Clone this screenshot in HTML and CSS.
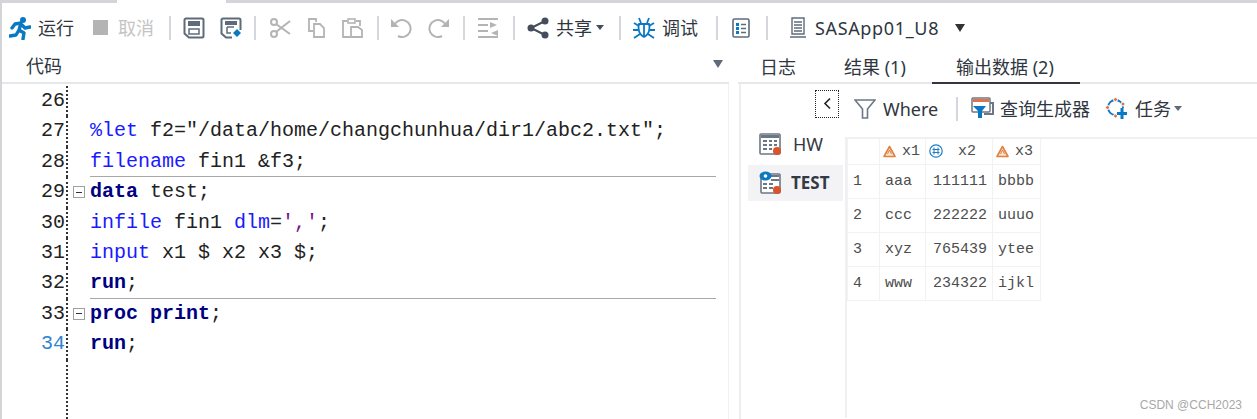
FILE: index.html
```html
<!DOCTYPE html>
<html lang="zh-CN">
<head>
<meta charset="utf-8">
<title>SAS Studio</title>
<link rel="stylesheet" href="styles.css">
</head>
<body>
<div class="app">
  <div class="topline"><span class="tl-a"></span><span class="tl-b"></span><span class="tl-c"></span></div>
  <div class="toolbar">
    <svg class="ic" width="22" height="24" viewBox="0 0 22 24"><circle cx="14" cy="4" r="3" fill="#0b78c4"/><path d="M12 7 L6 8 L3 12 M12 7 L10 14 L15 17 L14 23 M10 14 L7 19 L1 20 M13 9 L16 12 L21 11" fill="none" stroke="#0b78c4" stroke-width="3.4" stroke-linecap="round" stroke-linejoin="round"/></svg>
    <span class="lbl">运行</span>
    <span class="stop"></span>
    <span class="lbl off">取消</span>
    <span class="sep"></span>
    <svg class="ic" width="22" height="22" viewBox="0 0 22 22"><path d="M3 1.5 H19 A1.5 1.5 0 0 1 20.500 3 V19 A1.500 1.500 0 0 1 19 20.500 H6 L1.500 16.500 V3 A1.500 1.500 0 0 1 3 1.500 Z" fill="none" stroke="#5f6b7a" stroke-width="2"/><rect x="5" y="4" width="12" height="5" fill="#5f6b7a"/><rect x="6" y="12" width="10" height="5" fill="none" stroke="#5f6b7a" stroke-width="1.500"/></svg>
    <svg class="ic" width="22" height="22" viewBox="0 0 22 22"><path d="M3 1.500 H19 A1.500 1.500 0 0 1 20.500 3 V13 M12 20.500 H6 L1.500 16.500 V3 A1.500 1.500 0 0 1 3 1.500" fill="none" stroke="#5f6b7a" stroke-width="2"/><rect x="5" y="4" width="12" height="4" fill="#5f6b7a"/><path d="M7 10 V16 H11 M7 10 H14" fill="none" stroke="#5f6b7a" stroke-width="1.500"/><path d="M17 12 L21 16 L17 20 L13 16 Z" fill="#0b78c4"/></svg>
    <span class="sep"></span>
    <svg class="ic" width="22" height="22" viewBox="0 0 22 22"><circle cx="5" cy="5" r="3" fill="none" stroke="#b4b4b4" stroke-width="2"/><circle cx="5" cy="17" r="3" fill="none" stroke="#b4b4b4" stroke-width="2"/><path d="M7 7 L21 17 M7 15 L21 4" stroke="#b4b4b4" stroke-width="2"/></svg>
    <svg class="ic" width="19" height="22" viewBox="0 0 19 22"><path d="M9 5 V2 H2 V14 H6" fill="none" stroke="#b4b4b4" stroke-width="1.800"/><path d="M7 7 H13 L17 11 V20 H7 Z" fill="none" stroke="#b4b4b4" stroke-width="1.800"/></svg>
    <svg class="ic" width="22" height="22" viewBox="0 0 22 22"><path d="M6 4 H2 V20 H9 M15 4 H19 V9" fill="none" stroke="#b4b4b4" stroke-width="1.800"/><rect x="7" y="2" width="7" height="4" fill="none" stroke="#b4b4b4" stroke-width="1.600"/><path d="M10 10 H17 L21 13 V20 H10 Z" fill="none" stroke="#b4b4b4" stroke-width="1.800"/></svg>
    <span class="sep"></span>
    <svg class="ic" width="23" height="22" viewBox="0 0 23 22"><path d="M4 9 A8.500 8.500 0 1 1 8 19" fill="none" stroke="#b4b4b4" stroke-width="2"/><path d="M1 2 V10 H9 Z" fill="#b4b4b4"/></svg>
    <svg class="ic" width="23" height="22" viewBox="0 0 23 22"><path d="M19 9 A8.500 8.500 0 1 0 15 19" fill="none" stroke="#b4b4b4" stroke-width="2"/><path d="M22 2 V10 H14 Z" fill="#b4b4b4"/></svg>
    <span class="sep"></span>
    <svg class="ic" width="22" height="22" viewBox="0 0 22 22"><path d="M1 2 H21 M1 20 H21 M1 8 H11 M1 14 H11" stroke="#b4b4b4" stroke-width="2"/><path d="M13 5 L20 8 L13 11 Z M21 13 L14 16 L21 19 Z" fill="#b4b4b4"/></svg>
    <span class="sep"></span>
    <svg class="ic" width="23" height="22" viewBox="0 0 23 22"><path d="M18 4 L4 11 L18 18" fill="none" stroke="#444e5a" stroke-width="2"/><circle cx="18" cy="4" r="3.500" fill="#444e5a"/><circle cx="4" cy="11" r="3.500" fill="#444e5a"/><circle cx="18" cy="18" r="3.500" fill="#444e5a"/></svg>
    <span class="lbl">共享</span>
    <span class="caret"></span>
    <span class="sep"></span>
    <svg class="ic" width="22" height="24" viewBox="0 0 22 24"><path d="M6 8 H16 C17 11 17 18 11 21 C5 18 5 11 6 8 Z" fill="none" stroke="#0b78c4" stroke-width="1.800"/><path d="M11 8 V21 M6 2 L8 7 M16 2 L14 7 M1 7 L6 10 M21 7 L16 10 M0 14 H6 M22 14 H16 M1 22 L7 18 M21 22 L15 18" fill="none" stroke="#0b78c4" stroke-width="1.800"/></svg>
    <span class="lbl">调试</span>
    <span class="sep"></span>
    <svg class="ic" width="18" height="20" viewBox="0 0 18 20"><rect x="1" y="1" width="16" height="18" rx="1.500" fill="none" stroke="#5f6b7a" stroke-width="1.600"/><path d="M4 5 H7 V8 H4 Z M4 9 H7 V12 H4 Z M4 13 H7 V16 H4 Z" fill="#0b78c4"/><path d="M9 6.500 H14 M9 10.500 H14 M9 14.500 H14" stroke="#5f6b7a" stroke-width="1.600"/></svg>
    <span class="sep"></span>
    <svg class="ic" width="16" height="21" viewBox="0 0 16 21"><path d="M2 1 H14 V17 H2 Z" fill="none" stroke="#5f6b7a" stroke-width="1.400"/><path d="M4 5 H12 M4 8 H12 M4 11 H12 M4 14 H12 M0 20 H16" stroke="#5f6b7a" stroke-width="1.400"/></svg>
    <span class="lbl wide">SASApp01_U8</span>
    <span class="caret big"></span>
  </div>

  <div class="panes">
    <section class="left">
      <div class="tabs-l"><span class="tab-code">代码</span><span class="caret gray"></span></div>
      <div class="editor">
        <div class="ln"><span class="no">26</span><span class="fold"></span><span class="code"></span></div>
        <div class="ln"><span class="no">27</span><span class="fold"></span><span class="code"><span class="kw">%let</span> f2=<span class="str">"/data/home/changchunhua/dir1/abc2.txt"</span>;</span></div>
        <div class="ln"><span class="no">28</span><span class="fold"></span><span class="code rule"><span class="kw">filename</span> fin1 &amp;f3;</span></div>
        <div class="ln"><span class="no">29</span><span class="fold"><i class="box"></i></span><span class="code"><b class="bk">data</b> test;</span></div>
        <div class="ln"><span class="no">30</span><span class="fold"></span><span class="code"><span class="kw">infile</span> fin1 <span class="kw">dlm</span>=<span class="lit">','</span>;</span></div>
        <div class="ln"><span class="no">31</span><span class="fold"></span><span class="code"><span class="kw">input</span> x1 $ x2 x3 $;</span></div>
        <div class="ln"><span class="no">32</span><span class="fold"></span><span class="code rule"><b class="bk">run</b>;</span></div>
        <div class="ln"><span class="no">33</span><span class="fold"><i class="box"></i></span><span class="code"><b class="bk">proc print</b>;</span></div>
        <div class="ln"><span class="no cur">34</span><span class="fold"></span><span class="code"><b class="bk">run</b>;</span></div>
        <div class="ln fill"><span class="no"></span><span class="fold"></span><span class="code"></span></div>
      </div>
    </section>

    <section class="right">
      <div class="tabs-r">
        <span class="tab t1">日志</span>
        <span class="tab t2">结果 (1)</span>
        <span class="tab t3">输出数据 (2)</span>
      </div>
      <div class="body-r">
        <div class="tools-r">
          <span class="collapse"><svg width="9" height="13" viewBox="0 0 9 13"><path d="M7 1.500 L2 6.500 L7 11.500" fill="none" stroke="#222" stroke-width="1.600"/></svg></span>
          <svg class="ic" width="22" height="22" viewBox="0 0 22 22"><path d="M1 2 H21 L13.500 11 V20 H8.500 V11 Z" fill="none" stroke="#6c7785" stroke-width="1.600"/></svg>
          <span class="lbl">Where</span>
          <span class="sep"></span>
          <svg class="ic" width="23" height="23" viewBox="0 0 23 23"><rect x="1" y="1" width="18" height="14" rx="1" fill="#fff" stroke="#6c7785" stroke-width="1.500"/><rect x="2" y="2" width="16" height="3" fill="#e0734a"/><path d="M19 6 H22 V17 H13" fill="none" stroke="#6c7785" stroke-width="2"/><path d="M2 9 H15 L11 14 V21 H7 V14 Z" fill="#0b78c4"/></svg>
          <span class="lbl">查询生成器</span>
          <svg class="ic" width="23" height="23" viewBox="0 0 23 23"><circle cx="10.500" cy="10.500" r="7.500" fill="none" stroke="#0b78c4" stroke-width="1.800"/><circle cx="10.500" cy="2.500" r="2" fill="#e0734a" stroke="#fff"/><circle cx="2.500" cy="10.500" r="2" fill="#e0734a" stroke="#fff"/><circle cx="18" cy="7" r="2" fill="#e0734a" stroke="#fff"/><circle cx="10.500" cy="19" r="2" fill="#e0734a" stroke="#fff"/><path d="M17 11 V22 M12 16.500 H22" stroke="#fff" stroke-width="5"/><path d="M17 11 V22 M12 16.500 H22" stroke="#0b78c4" stroke-width="3"/></svg>
          <span class="lbl">任务</span>
          <span class="caret gray small"></span>
        </div>
        <div class="content-r">
          <nav class="side">
            <div class="item">
              <svg width="23" height="23" viewBox="0 0 23 23"><rect x="1" y="1" width="20" height="20" rx="1" fill="#fff" stroke="#6c7785" stroke-width="1.600"/><rect x="2" y="2" width="18" height="3" fill="#6c7785"/><path d="M4 8 H8 M10 8 H13 M15 8 H18 M4 12 H8 M10 12 H13 M15 12 H18 M4 16 H8 M10 16 H13" stroke="#6c7785" stroke-width="1.800"/><circle cx="18" cy="18" r="4" fill="#d9532c"/></svg>
              <span class="name">HW</span>
            </div>
            <div class="item on">
              <svg width="23" height="24" viewBox="0 0 23 24"><rect x="2" y="3" width="19" height="19" rx="1" fill="#fff" stroke="#6c7785" stroke-width="1.600"/><path d="M12 5 H20 M12 9 H20 M4 13 H8 M10 13 H14 M4 17 H8 M10 17 H14" stroke="#6c7785" stroke-width="1.800"/><ellipse cx="6.500" cy="5" rx="6" ry="4.500" fill="#0b78c4"/><circle cx="6.500" cy="5" r="1.800" fill="#fff"/><circle cx="18" cy="19" r="4" fill="#d9532c"/></svg>
              <span class="name">TEST</span>
            </div>
          </nav>
          <div class="grid-wrap">
            <table class="grid">
              <colgroup><col class="c0"><col class="c1"><col class="c2"><col class="c3"></colgroup>
              <thead>
                <tr>
                  <th></th>
                  <th><span class="h"><svg class="tri" width="13" height="13" viewBox="0 0 13 13"><path d="M6.500 1.500 L12 11.500 H1 Z" fill="#fbe3d3" stroke="#e0813f" stroke-width="1.600" stroke-linejoin="round"/><path d="M4.500 9 L6.500 5 L8.500 9" fill="none" stroke="#e0813f"/></svg>x1</span></th>
                  <th><span class="h"><svg class="num" width="14" height="14" viewBox="0 0 14 14"><circle cx="7" cy="7" r="6.200" fill="none" stroke="#1f7cc4" stroke-width="1.200"/><path d="M5 3.500 V10.500 M9 3.500 V10.500 M3.500 5.500 H10.500 M3.500 8.500 H10.500" stroke="#1f7cc4"/></svg><span class="hx2">x2</span></span></th>
                  <th><span class="h"><svg class="tri" width="13" height="13" viewBox="0 0 13 13"><path d="M6.500 1.500 L12 11.500 H1 Z" fill="#fbe3d3" stroke="#e0813f" stroke-width="1.600" stroke-linejoin="round"/><path d="M4.500 9 L6.500 5 L8.500 9" fill="none" stroke="#e0813f"/></svg>x3</span></th>
                </tr>
              </thead>
              <tbody>
                <tr><td>1</td><td>aaa</td><td>111111</td><td>bbbb</td></tr>
                <tr><td>2</td><td>ccc</td><td>222222</td><td>uuuo</td></tr>
                <tr><td>3</td><td>xyz</td><td>765439</td><td>ytee</td></tr>
                <tr><td>4</td><td>www</td><td>234322</td><td>ijkl</td></tr>
              </tbody>
            </table>
          </div>
        </div>
      </div>
    </section>
  </div>
  <div class="mark">CSDN @CCH2023</div>
</div>
</body>
</html>
```

FILE: styles.css
```css
* { box-sizing: border-box; }
html, body { margin: 0; padding: 0; background: #fff; }
body { width: 1257px; height: 419px; overflow: hidden; font-family: "Noto Sans", "Noto Sans CJK SC", sans-serif; color: #2f3640; }
.app { position: relative; width: 1257px; height: 419px; border-left: 2px solid #d4d5d9; display: flex; flex-direction: column; }

.topline { display: flex; height: 3px; margin-left: -2px; flex: none; }
.tl-a { width: 117px; background: #d4d5d9; }
.tl-b { width: 109px; background: #fff; }
.tl-c { flex: 1; background: #d4d5d9; }

.toolbar { height: 47px; flex: none; display: grid; align-items: center; justify-items: start; padding: 2px 0 0 7px;
  grid-template-columns: 29px 55px 25px 51px 14px 37px 34px 15px 38px 34px 36px 13px 37px 36px 14px 36px 14px 29px 40px 23px 14px 29px 54px 16px 34px 24px 25px 140px 12px; }
.ic { display: block; }
.lbl { font-size: 18px; line-height: 24px; white-space: nowrap; color: #2f3640; }
.lbl.off { color: #c4c4c4; }
.lbl.wide { letter-spacing: 0.65px; }
.stop { width: 15px; height: 15px; background: #b4b4b4; }
.sep { width: 2px; height: 24px; background: #d4d7db; }
.caret { width: 0; height: 0; border-left: 4px solid transparent; border-right: 4px solid transparent; border-top: 5px solid #444e5a; }
.caret.big { border-left-width: 5px; border-right-width: 5px; border-top-width: 8px; border-top-color: #333; }
.caret.gray { border-top-color: #5f6b7a; }

.panes { flex: 1; display: grid; grid-template-columns: 734px 1fr; min-height: 0; }

.left { display: flex; flex-direction: column; min-width: 0; }
.tabs-l { height: 34px; flex: none; margin-right: 7px; border-bottom: 2px solid #e6e7e9; display: flex; align-items: center; justify-content: space-between; padding: 0 6px 0 24px; }
.tab-code { font-size: 18px; line-height: 24px; color: #2f3640; }
.tabs-l .caret { border-left-width: 5px; border-right-width: 5px; border-top-width: 8px; margin-bottom: 4px; }
.editor { flex: 1; display: flex; flex-direction: column; padding-top: 2px; margin-right: 7px; border-right: 1px solid #f1f1f2; font-family: "Liberation Mono", monospace; font-size: 20px; color: #222; min-height: 0; }
.ln { height: 30.4px; flex: none; display: flex; align-items: center; }
.ln.fill { flex: 1; height: auto; }
.no { width: 64px; text-align: right; padding-right: 1px; height: 100%; line-height: 30.4px; flex: none; color: #222; }
.no.cur { color: #2f84cf; }
.fold { width: 24px; height: 100%; flex: none; border-left: 2px dotted #333; display: flex; align-items: center; padding-left: 5px; }
.box { display: block; width: 12px; height: 12px; border: 1px solid #a0a0a0; position: relative; }
.box::after { content: ""; display: block; width: 6px; height: 1px; background: #333; margin: 4.500px 2px; }
.code { flex: 1; height: 100%; line-height: 30.4px; white-space: pre; }
.code.rule { border-bottom: 1px solid #a8a8a8; margin-right: 12px; }
.kw { color: #1a1aff; }
.str { color: #222; }
.lit { color: #7a0f8f; }
.bk { color: #000080; font-weight: 700; }

.right { display: flex; flex-direction: column; min-width: 0; }
.tabs-r { height: 34px; flex: none; border-bottom: 2px solid #e6e7e9; display: flex; align-items: flex-end; margin-left: 2px; }
.tab { font-size: 18px; line-height: 24px; padding-bottom: 3px; height: 32px; color: #2f3640; margin-bottom: -2px; white-space: nowrap; padding-top: 3px; }
.t1 { margin-left: 22px; width: 84px; }
.t2 { width: 88px; }
.t3 { width: 148px; padding-left: 24px; border-bottom: 2px solid #33363b; height: 34px; padding-top: 5px; }

.body-r { flex: 1; display: flex; flex-direction: column; border-left: 2px solid #eeeef0; margin-left: 3px; min-height: 0; }
.tools-r { height: 54px; flex: none; display: grid; align-items: center; justify-items: start; padding: 0 0 5px 74px;
  grid-template-columns: 39px 29px 73px 15px 29px 105px 30px 39px 10px; }
.collapse { width: 24px; height: 28px; border: 1px dotted #222; display: flex; align-items: center; justify-content: center; margin-top: -10px; }
.content-r { flex: 1; display: flex; min-height: 0; }
.side { width: 104px; flex: none; padding: 0 0 0 7px; display: flex; flex-direction: column; }
.item { height: 36px; width: 95px; display: flex; align-items: center; padding-left: 11px; margin-top: -12px; }
.item + .item { margin-top: 3px; }
.item.on { background: #f3f3f5; }
.name { font-size: 18px; margin-left: 11px; line-height: 24px; color: #333a44; }
.on .name { font-weight: 700; font-size: 17px; margin-left: 9px; }

.grid-wrap { flex: 1; border-top: 2px solid #f0f0f2; border-left: 2px solid #f0f0f2; margin-top: -1px; height: 100%; }
.grid { border-collapse: collapse; table-layout: fixed; width: 193px; font-family: "Liberation Mono", monospace; font-size: 15px; color: #4d4d4d; }
.c0 { width: 32px; } .c1 { width: 46px; } .c2 { width: 67px; } .c3 { width: 48px; }
.grid th { height: 25px; font-weight: 400; padding: 0; border: 1px solid #f2f2f4; border-top: 0; text-align: left; }
.grid td { height: 34px; padding: 0 0 0 5px; border: 1px solid #f2f2f4; }
.grid td:first-child { padding-left: 5px; }
.grid td:nth-child(3) { padding-left: 7px; }
.h { display: flex; align-items: center; padding-left: 3px; }
.tri { margin-right: 6px; }
.num { margin-right: 0; }
.hx2 { margin-left: 15px; }

.mark { position: absolute; right: 15px; bottom: 6px; font-family: "Liberation Sans", sans-serif; font-size: 12px; line-height: 16px; color: #a8a8a8; }
```
